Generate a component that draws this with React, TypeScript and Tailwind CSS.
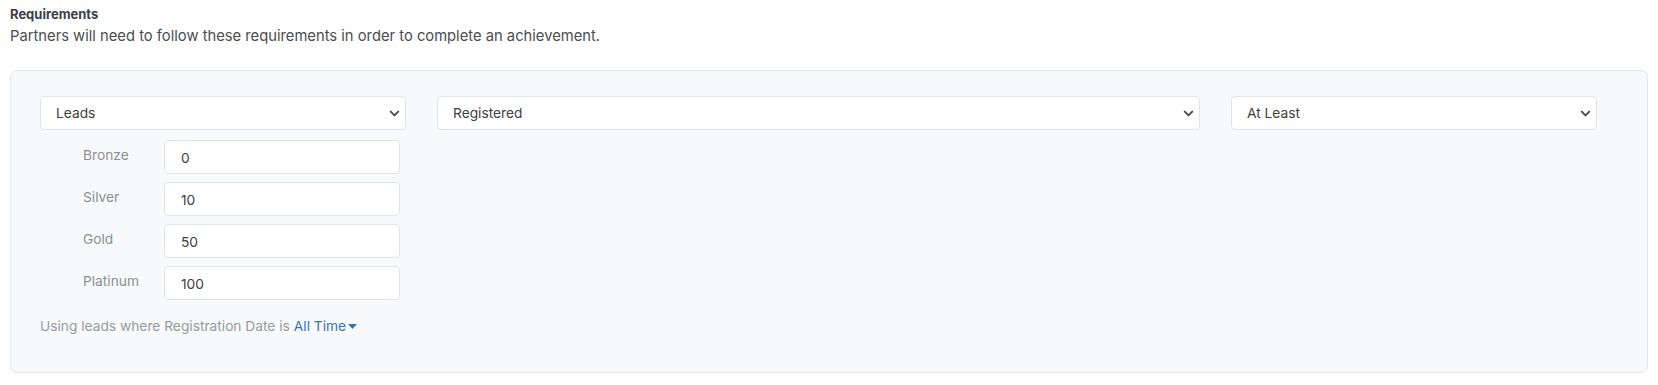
import { ChevronDown } from 'lucide-react'

const tiers = [
  { name: 'Bronze', value: '0' },
  { name: 'Silver', value: '10' },
  { name: 'Gold', value: '50' },
  { name: 'Platinum', value: '100' },
]

function Select({ label, width }: { label: string; width: string }) {
  return (
    <div
      className={`flex h-[34px] ${width} items-center justify-between rounded-[4px] border border-[#e1e5ea] bg-white pl-[15px] pr-[3px] text-[13.75px] text-[#3d4044]`}
    >
      <span>{label}</span>
      <ChevronDown size={15} strokeWidth={3.2} className="text-[#4a4d52]" />
    </div>
  )
}

export default function App() {
  return (
    <div className="min-h-[385px] bg-white px-[10px] pt-[6px] font-['Inter','Liberation_Sans',sans-serif]">
      <h2 className="text-[13px] font-bold leading-[17px] text-[#3d4044]">Requirements</h2>
      <p className="mt-[3px] text-[14.75px] leading-[21px] text-[#4a4d52]">
        Partners will need to follow these requirements in order to complete an achievement.
      </p>

      <div className="mt-[23px] h-[303px] w-[1638px] rounded-[7px] border border-[#e3e7eb] bg-[#f8f9fa] pl-[29px] pt-[25px]">
        <div className="flex gap-[31px]">
          <Select label="Leads" width="w-[366px]" />
          <Select label="Registered" width="w-[763px]" />
          <Select label="At Least" width="w-[366px]" />
        </div>

        <div className="mt-[10px] flex flex-col gap-[8px]">
          {tiers.map((t) => (
            <div key={t.name} className="flex items-start">
              <span className="w-[124px] pl-[43px] pt-[5px] text-[13.75px] leading-[20px] text-[#8b9096]">
                {t.name}
              </span>
              <div className="flex h-[34px] w-[236px] items-center rounded-[4px] border border-[#e1e5ea] bg-white pl-[16px] pt-[2px] text-[13.75px] text-[#3d4044]">
                {t.value}
              </div>
            </div>
          ))}
        </div>

        <p className="mt-[16px] flex items-center text-[13.75px] leading-[20px] text-[#969ca3]">
          Using leads where Registration Date is
          <span className="ml-[4px] text-[#3476b2]">All Time</span>
          <svg width="9" height="6" viewBox="0 0 9 6" className="ml-[2px] mt-[1px]">
            <path d="M0 0h9L4.5 5z" fill="#3476b2" />
          </svg>
        </p>
      </div>
    </div>
  )
}
